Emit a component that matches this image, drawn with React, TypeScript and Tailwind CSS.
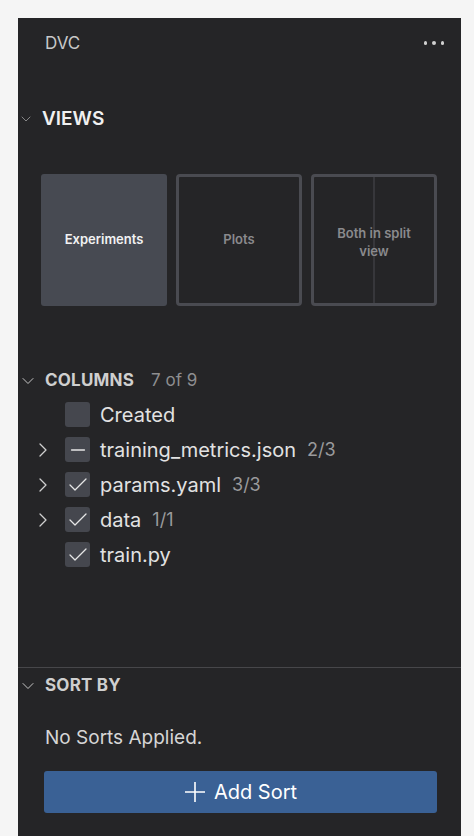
import { ChevronDown, ChevronRight, Check, Minus } from "lucide-react";

const font = { fontFamily: "Inter, 'Noto Sans', sans-serif" };

type Col = {
  name: string;
  count?: string;
  state: "none" | "some" | "all";
  expandable: boolean;
};

const columns: Col[] = [
  { name: "Created", state: "none", expandable: false },
  { name: "training_metrics.json", count: "2/3", state: "some", expandable: true },
  { name: "params.yaml", count: "3/3", state: "all", expandable: true },
  { name: "data", count: "1/1", state: "all", expandable: true },
  { name: "train.py", state: "all", expandable: false },
];

const SectionHeader = ({ title, extra }: { title: string; extra?: string }) => (
  <div className="flex h-[30px] items-center">
    <div className="flex w-[20px] justify-center">
      <ChevronDown size={24} strokeWidth={1.2} className="text-[#c5c5c5]" />
    </div>
    <span className="ml-[7px] text-[17px] font-bold tracking-[0.2px] text-[#cfcfcf]">{title}</span>
    {extra && <span className="ml-[17px] text-[17px] text-[#8e8e90]">{extra}</span>}
  </div>
);

const CheckBox = ({ state }: { state: Col["state"] }) => (
  <div className="flex h-[25px] w-[25px] items-center justify-center rounded-[3px] bg-[#45474e]">
    {state === "all" && <Check size={24} strokeWidth={1.3} className="text-[#e6e6e6]" />}
    {state === "some" && <Minus size={22} strokeWidth={1.5} className="text-[#e6e6e6]" />}
  </div>
);

export default function App() {
  return (
    <div className="min-h-[836px] bg-[#f5f5f5] pl-[18px] pr-[13px] pt-[18px]" style={font}>
      <div className="flex min-h-[818px] flex-col bg-[#252527]">
        <div className="flex h-[50px] items-center justify-between pl-[27px] pr-[17px]">
          <span className="translate-y-[1px] text-[17px] text-[#c8c8c8]">DVC</span>
          <div className="flex gap-[5px]">
            <span className="h-[3.5px] w-[3.5px] rounded-full bg-[#d0d0d0]" />
            <span className="h-[3.5px] w-[3.5px] rounded-full bg-[#d0d0d0]" />
            <span className="h-[3.5px] w-[3.5px] rounded-full bg-[#d0d0d0]" />
          </div>
        </div>

        <div className="mt-[36px] flex h-[30px] items-center">
          <div className="flex w-[16px] justify-center">
            <ChevronDown size={22} strokeWidth={1.2} className="text-[#a0a0a0]" />
          </div>
          <span className="ml-[8px] text-[19px] font-semibold text-[#f0f0f0]">VIEWS</span>
        </div>

        <div className="mt-[40px] grid grid-cols-3 gap-[9px] pl-[23px] pr-[24px]">
          <div className="flex h-[132px] items-center justify-center rounded-[3px] bg-[#474a52] text-[13px] font-semibold text-[#f2f2f2]">
            Experiments
          </div>
          <div className="flex h-[132px] items-center justify-center rounded-[4px] border-[3px] border-[#4a4b51] text-[13px] font-semibold text-[#8a8a8d]">
            Plots
          </div>
          <div className="relative flex h-[132px] items-center justify-center rounded-[4px] border-[3px] border-[#4a4b51]">
            <div className="absolute bottom-0 left-1/2 top-0 w-[1px] -translate-x-1/2 bg-[#4a4b51]" />
            <span className="relative translate-y-[2px] px-[16px] text-center text-[13px] font-semibold leading-[18px] text-[#8a8a8d]">
              Both in split view
            </span>
          </div>
        </div>

        <div className="mt-[60px]">
          <SectionHeader title="COLUMNS" extra="7 of 9" />
        </div>

        <div className="mt-[1px] flex flex-col">
          {columns.map((c) => (
            <div key={c.name} className="flex h-[35px] items-center">
              <div className="w-[37px] pl-[13px]">
                {c.expandable && (
                  <ChevronRight size={24} strokeWidth={1.3} className="text-[#cfcfcf]" />
                )}
              </div>
              <div className="ml-[10px]">
                <CheckBox state={c.state} />
              </div>
              <span className="ml-[10px] text-[20px] text-[#e2e2e2]">{c.name}</span>
              {c.count && <span className="ml-[11px] text-[18px] text-[#9a9a9c]">{c.count}</span>}
            </div>
          ))}
        </div>

        <div className="mt-[95px] border-t border-[#47474a] pt-[3px]">
          <SectionHeader title="SORT BY" />
          <div className="mt-[23px] pl-[27px] text-[19px] text-[#d6d6d6]">No Sorts Applied.</div>
          <div className="mt-[18px] pl-[26px] pr-[24px]">
            <button className="flex h-[42px] w-full items-center justify-center gap-[8px] rounded-[3px] bg-[#3a6195] text-[20px] text-white">
              <svg width="22" height="22" viewBox="0 0 22 22" fill="none" stroke="currentColor" strokeWidth="1.6">
                <path d="M11 1v20M1 11h20" />
              </svg>
              <span>Add Sort</span>
            </button>
          </div>
        </div>
      </div>
    </div>
  );
}
